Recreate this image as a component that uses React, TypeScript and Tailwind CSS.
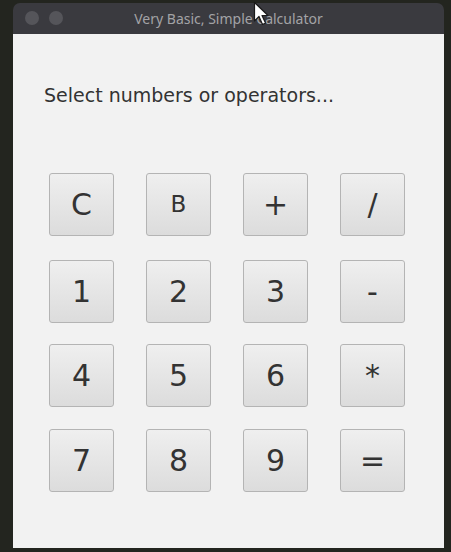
import React from 'react';

const rows: { label: string; small?: boolean }[][] = [
  [{ label: 'C' }, { label: 'B', small: true }, { label: '+' }, { label: '/' }],
  [{ label: '1' }, { label: '2' }, { label: '3' }, { label: '-' }],
  [{ label: '4' }, { label: '5' }, { label: '6' }, { label: '*' }],
  [{ label: '7' }, { label: '8' }, { label: '9' }, { label: '=' }],
];

// gap above each row, matching the uneven spacing of the original window
const rowMargins = ['mt-[67px]', 'mt-[24px]', 'mt-[21px]', 'mt-[22px]'];

function CalcButton({ label, small }: { label: string; small?: boolean }) {
  return (
    <button
      className={
        'flex h-[63px] w-[65px] items-center justify-center rounded-[3px] border border-[#b4b4b4] bg-gradient-to-b from-[#efefef] to-[#dcdcdc] leading-none text-[#333333] ' +
        (small ? 'text-[23px]' : 'text-[30px]')
      }
    >
      {label}
    </button>
  );
}

function Cursor() {
  return (
    <svg
      className="absolute left-[253px] top-[1px]"
      width="18"
      height="26"
      viewBox="0 0 18 26"
    >
      <path
        d="M1.5 1.5 L1.5 20 L6 15.5 L9.5 23.5 L12.5 22 L9 14.5 L15 14.5 Z"
        fill="#ffffff"
        stroke="#1a1a1a"
        strokeWidth="1.2"
        strokeLinejoin="round"
      />
    </svg>
  );
}

export default function App() {
  return (
    <div className="relative h-[552px] w-[451px] overflow-hidden bg-[#23251f] pl-[13px] pt-[3px]">
      <div className="flex h-[545px] w-[431px] flex-col overflow-hidden rounded-t-[7px]">
        <div className="relative flex h-[31px] shrink-0 items-center justify-center bg-[#3a3a3f]">
          <div className="absolute left-[12px] top-[8px] flex gap-[10px]">
            <span className="block h-[14px] w-[14px] rounded-full bg-[#55555a]" />
            <span className="block h-[14px] w-[14px] rounded-full bg-[#55555a]" />
          </div>
          <span
            className="text-[14px] text-[#a3a3a6]"
            style={{ fontFamily: '"Noto Sans", "Open Sans", sans-serif' }}
          >
            Very Basic, Simple Calculator
          </span>
        </div>
        <div
          className="flex flex-1 flex-col bg-[#f2f2f2]"
          style={{ fontFamily: '"DejaVu Sans", sans-serif' }}
        >
          <p className="mt-[50px] pl-[31px] text-[19px] leading-[22px] text-[#333333]">
            Select numbers or operators...
          </p>
          {rows.map((row, i) => (
            <div key={i} className={'flex gap-[32px] pl-[36px] ' + rowMargins[i]}>
              {row.map((b) => (
                <CalcButton key={b.label} label={b.label} small={b.small} />
              ))}
            </div>
          ))}
        </div>
      </div>
      <Cursor />
    </div>
  );
}
